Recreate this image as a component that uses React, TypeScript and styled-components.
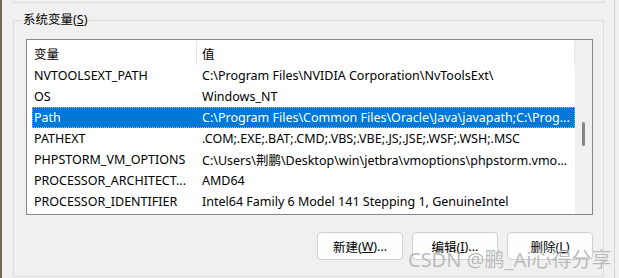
import styled, { createGlobalStyle } from "styled-components";

const GlobalStyle = createGlobalStyle`
  html, body {
    margin: 0;
    padding: 0;
    background: #f0f0f0;
  }
  body {
    font-family: "Noto Sans", "Noto Sans CJK SC", sans-serif;
    font-size: 12.5px;
    color: #000;
  }
`;

const Window = styled.div`
  position: relative;
  width: 619px;
  height: 278px;
  box-sizing: border-box;
  border-left: 2px solid #6e6a52;
  overflow: hidden;
  display: flex;
`;

const Content = styled.div`
  width: 613px;
  box-sizing: border-box;
  padding-left: 11px;
  border-right: 1px solid #d6d6d6;
  display: flex;
  flex-direction: column;
`;

const PrevGroupEdge = styled.div`
  width: 589px;
  height: 2px;
  border: 1px solid #dcdcdc;
  border-top: none;
`;

const GroupBox = styled.div`
  position: relative;
  margin-top: 17px;
  width: 591px;
  height: 257px;
  box-sizing: border-box;
  border: 1px solid #dcdcdc;
  padding: 18px 10px 0 12px;
  display: flex;
  flex-direction: column;
`;

const Legend = styled.span`
  position: absolute;
  top: -10px;
  left: 7px;
  padding: 0 2px;
  background: #f0f0f0;
  line-height: 18px;
  u {
    text-decoration: underline;
  }
`;

const ListBox = styled.div`
  width: 567px;
  height: 176px;
  box-sizing: border-box;
  border: 1px solid #828790;
  background: #fff;
  display: flex;
`;

const ListBody = styled.div`
  flex: 1;
  display: flex;
  flex-direction: column;
  overflow: hidden;
`;

const HeaderRow = styled.div`
  display: flex;
  height: 25px;
  align-items: stretch;
  flex-shrink: 0;
`;

const HeaderCell = styled.div<{ $width: number; $pad: number }>`
  width: ${(p) => p.$width}px;
  box-sizing: border-box;
  padding-left: ${(p) => p.$pad}px;
  display: flex;
  align-items: center;
  border-right: 1px solid #e5e5e5;
  margin: 1px 0 0;
`;

const Row = styled.div<{ $selected?: boolean }>`
  display: flex;
  height: 21px;
  margin-left: 5px;
  box-sizing: border-box;
  align-items: center;
  flex-shrink: 0;
  background: ${(p) => (p.$selected ? "#0078d7" : "transparent")};
  color: ${(p) => (p.$selected ? "#fff" : "#000")};
  outline: ${(p) => (p.$selected ? "1px dotted #f0a860" : "none")};
  outline-offset: -1px;
`;

const Cell = styled.div<{ $width: number; $pad: number }>`
  width: ${(p) => p.$width}px;
  box-sizing: border-box;
  padding-left: ${(p) => p.$pad}px;
  white-space: nowrap;
  overflow: hidden;
`;

const ScrollBar = styled.div`
  width: 17px;
  flex-shrink: 0;
  background: #f0f0f0;
  position: relative;
`;

const Thumb = styled.div`
  position: absolute;
  left: 7px;
  top: 82px;
  width: 3px;
  height: 24px;
  border-radius: 2px;
  background: #858585;
`;

const ButtonRow = styled.div`
  display: flex;
  justify-content: flex-end;
  gap: 9px;
  margin-top: 17px;
  width: 567px;
`;

const Button = styled.div`
  width: 86px;
  height: 28px;
  box-sizing: border-box;
  border: 1px solid #d0d0d0;
  border-radius: 4px;
  background: #fdfdfd;
  display: flex;
  align-items: center;
  justify-content: center;
  u {
    text-decoration: underline;
  }
`;

const Watermark = styled.div`
  position: absolute;
  left: 406px;
  top: 247px;
  font-size: 20px;
  line-height: 26px;
  color: rgba(120, 120, 120, 0.5);
  white-space: nowrap;
  text-shadow: 0 0 1px rgba(255, 255, 255, 0.8);
  pointer-events: none;
`;

const rows = [
  { name: "NVTOOLSEXT_PATH", value: "C:\\Program Files\\NVIDIA Corporation\\NvToolsExt\\" },
  { name: "OS", value: "Windows_NT" },
  {
    name: "Path",
    value: "C:\\Program Files\\Common Files\\Oracle\\Java\\javapath;C:\\Prog...",
    selected: true,
  },
  { name: "PATHEXT", value: ".COM;.EXE;.BAT;.CMD;.VBS;.VBE;.JS;.JSE;.WSF;.WSH;.MSC" },
  {
    name: "PHPSTORM_VM_OPTIONS",
    value: "C:\\Users\\荆鹏\\Desktop\\win\\jetbra\\vmoptions\\phpstorm.vmo...",
  },
  { name: "PROCESSOR_ARCHITECT...", value: "AMD64" },
  { name: "PROCESSOR_IDENTIFIER", value: "Intel64 Family 6 Model 141 Stepping 1, GenuineIntel" },
];

function App() {
  return (
    <>
      <GlobalStyle />
      <Window>
        <Content>
          <PrevGroupEdge />
          <GroupBox>
            <Legend>
              系统变量(<u>S</u>)
            </Legend>
            <ListBox>
              <ListBody>
                <HeaderRow>
                  <HeaderCell $width={170} $pad={7}>变量</HeaderCell>
                  <HeaderCell $width={378} $pad={5}>值</HeaderCell>
                </HeaderRow>
                {rows.map((r) => (
                  <Row key={r.name} $selected={r.selected}>
                    <Cell $width={164} $pad={2}>{r.name}</Cell>
                    <Cell $width={378} $pad={6}>{r.value}</Cell>
                  </Row>
                ))}
              </ListBody>
              <ScrollBar>
                <Thumb />
              </ScrollBar>
            </ListBox>
            <ButtonRow>
              <Button>
                新建(<u>W</u>)...
              </Button>
              <Button>
                编辑(<u>I</u>)...
              </Button>
              <Button>
                删除(<u>L</u>)
              </Button>
            </ButtonRow>
          </GroupBox>
        </Content>
        <Watermark>CSDN @鹏_Ai心得分享</Watermark>
      </Window>
    </>
  );
}

export default App;
